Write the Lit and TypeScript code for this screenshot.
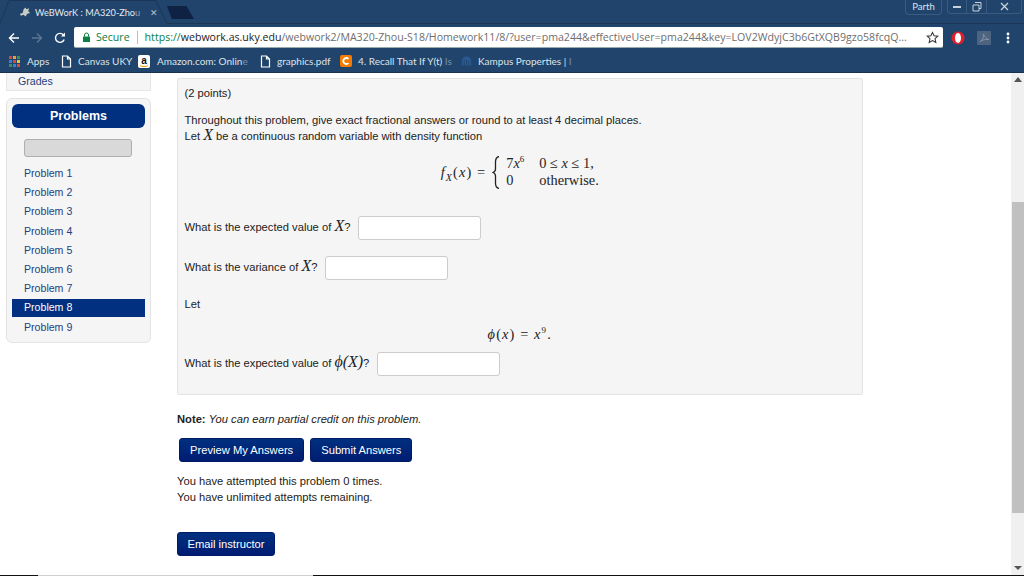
import { LitElement, html, css, svg } from "lit";
import { customElement } from "lit/decorators.js";

const PROBLEMS = [1, 2, 3, 4, 5, 6, 7, 8, 9];
const APP_COLORS = ["#d9463d", "#e8a13a", "#3f8f4f", "#3f7fd0", "#d9463d", "#e8c23a", "#3f8f4f", "#3f7fd0", "#d9463d"];

const pageIcon = svg`<svg width="11" height="13" viewBox="0 0 11 13"><path d="M1.500 1h5l3 3v8h-8z M6.500 1v3h3" fill="none" stroke="#fff" stroke-width="1.200"/></svg>`;

@customElement("app-root")
export class AppRoot extends LitElement {
  static styles = css`
    :host { display: block; width: 1024px; height: 576px; overflow: hidden; position: relative; background: #fff; font-family: "Liberation Sans", Arial, sans-serif; color: #222; }
    .chrome { height: 73px; background: #21446c; border-bottom: 1px solid #16324f; box-sizing: border-box; display: flex; flex-direction: column; font-family: Lato, "Open Sans", sans-serif; color: #fff; }
    .tabs { height: 24px; display: flex; align-items: flex-start; background: linear-gradient(#21446c 23px, #1a3757 23px); }
    .tab { position: relative; width: 167px; height: 24px; box-sizing: border-box; display: flex; align-items: center; padding-left: 19px; gap: 4px; font-size: 9.200px; background: #21446c; color: #e4e9ef; white-space: nowrap; }
    .tab .outline { position: absolute; left: 0; top: 0; }
    .tab .title { width: 108px; }
    .tab .title .fade { opacity: .55; }
    .tab .x { font-size: 9px; color: #b8c4d2; margin-left: 3px; }
    .newtab { width: 27px; height: 13px; margin: 6px 0 0 0; background: #0f2243; clip-path: polygon(0 0, 72% 0, 100% 100%, 18% 100%); }
    .spacer { flex: 1; }
    .user { margin-right: 5px; width: 35px; height: 14px; border: 1px solid #3a5a80; border-top: none; border-radius: 0 0 4px 4px; font-size: 9.500px; text-align: center; line-height: 14px; color: #dfe5ec; }
    .winbtns { display: flex; height: 13px; margin-right: 2px; border: 1px solid #3a5a80; border-top: none; border-radius: 0 0 4px 4px; }
    .winbtns div { display: flex; align-items: center; justify-content: center; border-right: 1px solid #3a5a80; height: 13px; }
    .winbtns div:last-child { border-right: none; }
    .wb-min { width: 18px; }
    .wb-res { width: 19px; }
    .wb-cls { width: 34px; }
    .toolbar { height: 26px; box-sizing: border-box; padding-top: 2px; display: flex; align-items: center; }
    .nav { width: 74px; display: flex; align-items: center; flex-shrink: 0; padding-left: 8px; box-sizing: border-box; gap: 11px; }
    .omni { width: 869px; align-self: flex-start; margin-top: 1px; height: 21px; box-sizing: border-box; background: #fff; border-bottom: 1px solid #9aa; border-radius: 2px; display: flex; align-items: center; font-family: "Open Sans", sans-serif; font-size: 10.600px; padding-left: 8px; white-space: nowrap; color: #6e6e6e; }
    .omni .sec { color: #0b8043; margin-left: 5px; }
    .omni .bar { width: 1px; height: 13px; background: #bbb; margin: 0 7px; }
    .omni .https { color: #0b8043; }
    .omni .host { color: #222; }
    .omni .star { margin-left: auto; margin-right: 4px; flex-shrink: 0; }
    .exts { display: flex; align-items: center; padding-left: 8px; gap: 12px; }
    .dots { margin-left: 3px; }
    .bookmarks { height: 22px; display: flex; align-items: center; font-size: 10px; color: #dde3ea; padding-left: 9px; white-space: nowrap; }
    .bm { display: flex; align-items: center; gap: 6px; flex-shrink: 0; }
    .bm-apps { width: 52px; gap: 7px; }
    .bm-canvas { width: 77px; }
    .bm-amazon { width: 122px; gap: 7px; }
    .bm-graphics { width: 80px; }
    .bm-recall { width: 121px; }
    .dim { opacity: .45; }
    .page { height: 503px; display: flex; position: relative; }
    .content { width: 1011px; display: flex; align-items: flex-start; padding-left: 6px; box-sizing: border-box; }
    .side { width: 145px; flex-shrink: 0; font-size: 10.600px; }
    .grades { height: 17px; background: #f5f5f5; border: 1px solid #e6e6e6; border-top: none; color: #24417e; padding-left: 11px; line-height: 16px; }
    .well { margin-top: 7px; height: 245px; box-sizing: border-box; background: #f5f5f5; border: 1px solid #e3e3e3; border-radius: 6px; padding: 5px; }
    .head { height: 24px; background: #00307f; border-radius: 6px; color: #fff; font-weight: bold; font-size: 12.500px; text-align: center; line-height: 24px; }
    .grey { width: 108px; height: 18px; box-sizing: border-box; margin: 11px auto 0 12px; background: #d9d9d9; border: 1px solid #aeaeae; border-radius: 3px; }
    .plist { margin-top: 7px; }
    .plist div { height: 19.200px; box-sizing: border-box; line-height: 19.200px; padding-left: 12px; color: #24417e; }
    .plist div.on { background: #00307f; background-clip: padding-box; border-top: 1px solid transparent; border-bottom: 1px solid transparent; color: #fff; line-height: 17.200px; }
    .main { margin-left: 26px; width: 686px; font-size: 11.200px; flex-shrink: 0; }
    .problem { margin-top: 5px; height: 317px; box-sizing: border-box; background: #f5f5f5; border: 1px solid #e3e3e3; border-radius: 2px; padding-left: 6.500px; }
    .problem p { margin: 0; line-height: 16px; }
    .pts { padding-top: 6px; }
    .problem .intro { margin-top: 11px; }
    .bigX { font-family: "Liberation Serif", serif; font-style: italic; font-size: 16px; line-height: 0; }
    .display { margin-left: -7px; display: flex; justify-content: center; align-items: center; font-family: "Liberation Serif", serif; font-size: 14.400px; color: #222; }
    .display i { font-style: italic; }
    .display sub { font-size: 10px; line-height: 0; }
    .spaced { letter-spacing: 1.100px; }
    .d1 { margin-top: 7px; height: 42px; gap: 6px; }
    .cases { display: grid; grid-template-columns: auto auto; column-gap: 15px; line-height: 17.500px; }
    sup { font-size: 9px; line-height: 0; }
    .q { display: flex; align-items: center; height: 24px; gap: 8px; }
    .qt { margin-bottom: 2px; }
    .q1 { margin-top: 23px; }
    .q2 { margin-top: 16px; }
    .q3 { margin-top: 8px; }
    .problem .let { margin-top: 16px; }
    .d2 { margin-top: 12px; height: 20px; }
    .ans { width: 123px; height: 24px; box-sizing: border-box; background: #fff; border: 1px solid #ccc; border-radius: 3px; flex-shrink: 0; }
    .note { margin-top: 17px; line-height: 15px; }
    .note em { font-style: italic; }
    .btnrow { display: flex; margin: 11px 0 0 2px; gap: 6px; }
    .btn { height: 24px; box-sizing: border-box; line-height: 23px; padding: 0 10px; color: #fff; border-radius: 3px; background: linear-gradient(#00307f, #001c72); border: 1px solid #001a66; }
    .status { margin-top: 11px; line-height: 16px; }
    .email { width: 98px; text-align: center; padding: 0; margin-top: 27px; }
    .scroll { width: 13px; background: #f0f0f0; position: relative; flex-shrink: 0; }
    .thumb { position: absolute; top: 129px; left: 1px; right: 0; height: 311px; background: #c0c0c0; }
    .up, .down { position: absolute; left: 3px; width: 0; height: 0; border-left: 4px solid transparent; border-right: 4px solid transparent; }
    .up { top: 4px; border-bottom: 5px solid #555; }
    .down { bottom: 6px; border-top: 4px solid #555; }
    .bline { position: absolute; left: 0; right: 0; bottom: 0; height: 1px; background: #111; }
    .bgrey { position: absolute; left: 38px; width: 275px; bottom: 0; height: 1px; background: #cfcfcf; }
  `;

  render() {
    return html`
      <div class="chrome">
        <div class="tabs">
          <div class="tab">
            <svg class="outline" width="167" height="24"><path d="M0 23.500 L9 .5 H156 L167 23.500" fill="none" stroke="#1a3757"/></svg>
            <svg width="12" height="12" viewBox="0 0 13 12"><path d="M1 8l3-1 1-4 2-2 1 2 3-1-1 3 2 2-3 1-2 3-2-2-3 1z" fill="#c9ccc4"/></svg>
            <span class="title">WeBWorK : MA320-Zho<span class="fade">u</span></span><span class="x">✕</span>
          </div>
          <div class="newtab"></div>
          <div class="spacer"></div>
          <div class="user">Parth</div>
          <div class="winbtns">
            <div class="wb-min"><svg width="9" height="3"><rect width="8" height="2" y="1" fill="#c9d2dc"/></svg></div>
            <div class="wb-res"><svg width="10" height="10"><path d="M3 .5h6v6h-2 M1 3h6v6H1z" fill="none" stroke="#c9d2dc"/></svg></div>
            <div class="wb-cls"><svg width="9" height="9"><path d="M1 1l7 7M8 1l-7 7" stroke="#c9d2dc" stroke-width="1.300"/></svg></div>
          </div>
        </div>
        <div class="toolbar">
          <div class="nav">
            <svg width="12" height="12" viewBox="0 0 12 12"><path d="M11 6H2M6 1.500L1.500 6 6 10.500" fill="none" stroke="#fff" stroke-width="1.400"/></svg>
            <svg width="12" height="12" viewBox="0 0 12 12"><path d="M1 6h9M6 1.500L10.500 6 6 10.500" fill="none" stroke="#5d7694" stroke-width="1.400"/></svg>
            <svg width="12" height="12" viewBox="0 0 12 12"><path d="M10.200 7.500A4.500 4.500 0 1 1 9.500 3" fill="none" stroke="#fff" stroke-width="1.400"/><path d="M11 .5v4H7z" fill="#fff"/></svg>
          </div>
          <div class="omni">
            <svg width="9" height="10" viewBox="0 0 9 10"><path d="M1 4.500h7V10H1z" fill="#0b8043"/><path d="M2.500 4.500V3a2 2 0 0 1 4 0v1.500" fill="none" stroke="#0b8043"/></svg>
            <span class="sec">Secure</span><span class="bar"></span>
            <span><span class="https">https://</span><span class="host">webwork.as.uky.edu</span>/webwork2/MA320-Zhou-S18/Homework11/8/?user=pma244&amp;effectiveUser=pma244&amp;key=LOV2WdyjC3b6GtXQB9gzo58fcqQ...</span>
            <svg class="star" width="13" height="13" viewBox="0 0 14 14"><path d="M7 1.500l1.700 3.700 4 .4-3 2.700.9 4L7 10.300l-3.600 2 .9-4-3-2.700 4-.4z" fill="none" stroke="#333" stroke-width="1.100"/></svg>
          </div>
          <div class="exts">
            <svg width="14" height="14" viewBox="0 0 14 14"><circle cx="7" cy="7" r="6.500" fill="#e0202a"/><ellipse cx="7" cy="7" rx="3" ry="5" fill="#fff"/></svg>
            <svg width="14" height="14" viewBox="0 0 14 14"><rect width="14" height="14" fill="#4d6481"/><path d="M3 11c3-2 4-6 3.500-8C7 5 9 8 12 8.500 8 8 5 9 3 11z" fill="none" stroke="#8b9bb0" stroke-width=".8"/></svg>
            <svg class="dots" width="4" height="12" viewBox="0 0 4 12"><circle cx="2" cy="2" r="1.400" fill="#fff"/><circle cx="2" cy="6" r="1.400" fill="#fff"/><circle cx="2" cy="10" r="1.400" fill="#fff"/></svg>
          </div>
        </div>
        <div class="bookmarks">
          <div class="bm bm-apps">
            <svg width="11" height="11" viewBox="0 0 11 11">
              ${APP_COLORS.map((c, i) => svg`<rect x=${(i % 3) * 4} y=${Math.floor(i / 3) * 4} width="3" height="3" fill=${c} />`)}
            </svg><span>Apps</span>
          </div>
          <div class="bm bm-canvas">${pageIcon}<span>Canvas UKY</span></div>
          <div class="bm bm-amazon">
            <svg width="12" height="13" viewBox="0 0 12 13"><rect width="12" height="13" rx="2" fill="#fff"/><text x="6" y="9" text-anchor="middle" font-size="10" font-weight="bold" font-family="Liberation Sans" fill="#111">a</text><path d="M2 10.500c2 1.500 6 1.500 8 0" stroke="#f90" fill="none"/></svg>
            <span>Amazon.com: Onlin<span class="dim">e</span></span>
          </div>
          <div class="bm bm-graphics">${pageIcon}<span>graphics.pdf</span></div>
          <div class="bm bm-recall">
            <svg width="12" height="12" viewBox="0 0 12 12"><rect width="12" height="12" rx="2" fill="#f57c00"/><path d="M8.500 4a3 3 0 1 0 0 4" fill="none" stroke="#fff" stroke-width="1.800"/></svg>
            <span>4. Recall That If Y(t) <span class="dim">Is</span></span>
          </div>
          <div class="bm">
            <svg width="11" height="12" viewBox="0 0 12 12"><path d="M1 11V6a5 5 0 0 1 10 0v5z" fill="#2a5a96"/><path d="M3.500 5v6M6 5v6M8.500 5v6" stroke="#21446c"/></svg>
            <span>Kampus Properties | <span class="dim">I</span></span>
          </div>
        </div>
      </div>
      <div class="page">
        <div class="content">
          <div class="side">
            <div class="grades">Grades</div>
            <div class="well">
              <div class="head">Problems</div>
              <div class="grey"></div>
              <div class="plist">
                ${PROBLEMS.map((n) => html`<div class=${n === 8 ? "on" : ""}>Problem ${n}</div>`)}
              </div>
            </div>
          </div>
          <div class="main">
            <div class="problem">
              <p class="pts">(2 points)</p>
              <p class="intro">Throughout this problem, give exact fractional answers or round to at least 4 decimal places.</p>
              <p>Let <span class="bigX">X</span> be a continuous random variable with density function</p>
              <div class="display d1">
                <span class="spaced"><i>f<sub>X</sub></i>(<i>x</i>) =</span>
                <svg width="8" height="33" viewBox="0 0 8 33"><path d="M7 .5C4.500 1 3.500 3 3.500 6v7c0 2-1 3-2.500 3.500C2.500 17 3.500 18 3.500 20v7c0 3 1 5 3.500 5.500" fill="none" stroke="#222" stroke-width="1.300"/></svg>
                <div class="cases">
                  <span>7<i>x</i><sup>6</sup></span><span>0 ≤ <i>x</i> ≤ 1,</span>
                  <span>0</span><span>otherwise.</span>
                </div>
              </div>
              <div class="q q1"><span class="qt">What is the expected value of <span class="bigX">X</span>?</span><span class="ans"></span></div>
              <div class="q q2"><span class="qt">What is the variance of <span class="bigX">X</span>?</span><span class="ans"></span></div>
              <p class="let">Let</p>
              <div class="display d2"><span class="spaced"><i>ϕ</i>(<i>x</i>) = <i>x</i><sup>9</sup>.</span></div>
              <div class="q q3"><span class="qt">What is the expected value of <span class="bigX">ϕ(X)</span>?</span><span class="ans"></span></div>
            </div>
            <div class="note"><b>Note:</b> <em>You can earn partial credit on this problem.</em></div>
            <div class="btnrow"><div class="btn">Preview My Answers</div><div class="btn">Submit Answers</div></div>
            <div class="status">You have attempted this problem 0 times.<br />You have unlimited attempts remaining.</div>
            <div class="btn email">Email instructor</div>
          </div>
        </div>
        <div class="scroll">
          <div class="up"></div><div class="thumb"></div><div class="down"></div>
        </div>
        <div class="bline"></div><div class="bgrey"></div>
      </div>
    `;
  }
}
